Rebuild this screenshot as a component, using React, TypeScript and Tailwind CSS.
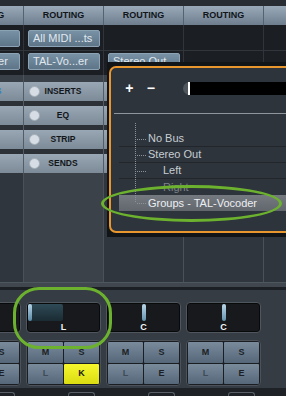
import React from 'react';

type ColProps = {
  head?: string;
  slot1?: string;
  slot2?: string;
  activeInsert?: boolean;
  selected?: boolean;
  meter?: 'L' | 'C' | 'none' | 'blank';
  k?: boolean;
};

const bands = ['INSERTS', 'EQ', 'STRIP', 'SENDS'];

const SlotButton = ({ label }: { label: string }) => (
  <div className="h-[17px] rounded-[2px] border border-[#8ba3b5] bg-gradient-to-b from-[#7891a4] to-[#5e7588] px-[4px] text-[11px] leading-[15px] text-[#e0e8ef] whitespace-nowrap overflow-hidden">
    {label}
  </div>
);

const Cell = ({ label, dim, yellow }: { label: string; dim?: boolean; yellow?: boolean }) => (
  <div
    className={`flex items-center justify-center text-[9px] font-bold rounded-[1px] ${
      yellow
        ? 'bg-gradient-to-b from-[#f7f72c] to-[#dcdc12] text-[#151515]'
        : `bg-gradient-to-b from-[#7a8b9c] to-[#56677a] ${dim ? 'text-[#404b57]' : 'text-[#1a1f25]'}`
    }`}
  >
    {label}
  </div>
);

const Column = ({ head = 'ROUTING', slot1, slot2, activeInsert, selected, meter = 'C', k }: ColProps) => (
  <div className="w-[80px] shrink-0 flex flex-col">
    {/* header */}
    <div className="h-[19px] border-l border-[#56636f] bg-gradient-to-b from-[#9aaab9] to-[#6e7e8e] flex items-center justify-center text-[9px] font-bold text-[#10151a]">
      {head}
    </div>

    {/* routing slots */}
    <div className="h-[25px] border-l border-[#2f353b] bg-[#1b1f23] pt-[5px] pl-[4px] pr-[3px]">
      {slot1 && <SlotButton label={slot1} />}
    </div>
    <div className="h-px bg-[#30363c]" />
    <div className="h-[24px] border-l border-[#2f353b] bg-[#1b1f23] pt-[2px] pl-[4px] pr-[3px]">
      {slot2 && <SlotButton label={slot2} />}
    </div>

    {/* section toggles */}
    <div className="h-[7px] border-l border-[#4a535c] bg-[#394047]" />
    <div className="flex flex-col gap-[5px] border-l border-[#525d68] bg-[#2b3137]">
      {bands.map((b, i) => (
        <div key={b} className="h-[19px] flex items-center bg-gradient-to-b from-[#99a6b3] to-[#7d8a97]">
          <div className="ml-[5px] w-[11px] h-[11px] rounded-full bg-[#d6dde4] border border-[#a2acb6]" />
          <div
            className={`flex-1 pr-[17px] text-center text-[8.5px] font-bold ${
              activeInsert && i === 0 ? 'text-[#2f80d2]' : 'text-[#12161a]'
            }`}
          >
            {b}
          </div>
        </div>
      ))}
    </div>

    {/* empty panel */}
    <div className={`h-[109px] border-l border-[#4a5259] ${selected ? 'bg-[#3b4249]' : 'bg-[#30363d]'}`} />
    <div className="h-[5px] border-t border-[#4e565e] bg-[#40474e]" />
    <div className="h-[3px] bg-[#1c2024]" />

    {/* meter + buttons */}
    <div className="h-[98px] bg-[#363c43] pt-[12px]">
      {meter !== 'blank' && (
        <>
          <div className="h-[31px] ml-[3px] mr-[2px] rounded-[4px] border border-[#50565d] bg-[#17191c] shadow-[inset_0_0_0_1px_#08090a] pt-[1px] px-[1px] flex flex-col">
            {meter === 'L' ? (
              <div className="h-[18px] w-[35px] rounded-[2px] bg-gradient-to-b from-[#2f4b57] to-[#1a2b33] flex">
                <div className="w-[4px] h-full rounded-[2px] bg-gradient-to-b from-[#b4d3e6] to-[#5c8aa6]" />
              </div>
            ) : (
              <div className="h-[18px] w-[4px] mx-auto rounded-full bg-gradient-to-b from-[#bcd8ea] to-[#6592ae]" />
            )}
            <div className="mt-[2px] text-center text-[9px] leading-[9px] font-bold text-[#f2f4f6]">
              {meter === 'L' ? 'L' : 'C'}
            </div>
          </div>
          <div className="mt-[7px] ml-[3px] mr-[2px] h-[46px] rounded-[4px] border border-[#4b5259] bg-[#1a1e22] p-[1px] grid grid-cols-2 grid-rows-2 gap-[1px]">
            <Cell label="M" />
            <Cell label="S" />
            <Cell label="L" dim />
            {k ? <Cell label="K" yellow /> : <Cell label="E" />}
          </div>
        </>
      )}
    </div>

    <div className="h-[8px] bg-[#1e2226] pt-[4px]">
      {meter !== 'blank' && <div className="ml-[45px] w-[27px] h-[6px] rounded-t-[3px] border border-[#596068] border-b-0" />}
    </div>
  </div>
);

const TreeLines = () => (
  <svg className="absolute left-0 top-[-8px] z-10 pointer-events-none" width="28" height="90" viewBox="0 0 28 90">
    <g stroke="#8c9298" strokeWidth="1" strokeDasharray="1 1">
      <line x1="16.5" y1="0" x2="16.5" y2="80" />
      <line x1="18" y1="16.5" x2="27" y2="16.5" />
      <line x1="18" y1="32.5" x2="27" y2="32.5" />
      <line x1="18" y1="48.5" x2="27" y2="48.5" />
      <line x1="18" y1="80.5" x2="27" y2="80.5" />
    </g>
  </svg>
);

const BusPopup = () => (
  <div className="absolute left-[107px] top-[62px] w-[200px] h-[175px] bg-[#121518] pl-[2px] pt-[4px] pb-[4px]">
    <div className="h-full rounded-[7px] border-2 border-[#e8962e] bg-[#2e343b] overflow-hidden flex flex-col">
      <div className="mt-[14px] h-[13px] flex items-center">
        <span className="ml-[14px] w-[10px] text-center text-[14px] font-bold leading-[13px] text-white">+</span>
        <span className="ml-[13px] w-[10px] text-center text-[14px] font-bold leading-[13px] text-white">−</span>
        <div className="ml-[28px] w-[140px] h-[13px] rounded-l-full bg-[#50565d] pl-[5px]">
          <div className="h-full bg-black border-l-2 border-white" />
        </div>
      </div>
      <div className="mt-[18px] ml-[3px] h-px bg-[#8f959b]" />
      <div className="mt-[17px] ml-[8px] relative text-[11px] text-[#c6cdd4]">
        <div className="h-[16px] flex items-center pl-[29px] border-b border-[#22262b]">No Bus</div>
        <div className="h-[16px] flex items-center pl-[29px] border-b border-[#22262b]">Stereo Out</div>
        <div className="h-[16px] flex items-center pl-[44px] border-b border-[#22262b]">Left</div>
        <div className="h-[16px] flex items-center pl-[44px] text-[#7c838a]">Right</div>
        <div className="h-[16px] flex items-center pl-[29px] bg-gradient-to-b from-[#757a81] to-[#62676e] text-[#eceff2]">
          Groups - TAL-Vocoder
        </div>
        <TreeLines />
      </div>
    </div>
  </div>
);

export default function App() {
  return (
    <div className="relative w-[286px] h-[396px] overflow-hidden bg-[#1b1f23] font-['Liberation_Sans',Arial,sans-serif]">
      <div className="h-[6px] bg-[#272d33]" />
      <div className="flex -ml-[57px]">
        <Column slot1="Mono In" slot2="TAL-Vo...er" activeInsert />
        <Column slot1="All MIDI ...ts" slot2="TAL-Vo...er" selected meter="L" k />
        <Column slot2="Stereo Out" />
        <Column />
        <Column head="" meter="blank" />
      </div>

      <BusPopup />

      {/* annotation rings */}
      <div className="absolute left-[101px] top-[185px] w-[181px] h-[37px] rounded-[50%] border-[3px] border-[#6cb22f]" />
      <div className="absolute left-[13px] top-[287px] w-[99px] h-[62px] rounded-[26px] border-[3px] border-[#6cb22f]" />
    </div>
  );
}
